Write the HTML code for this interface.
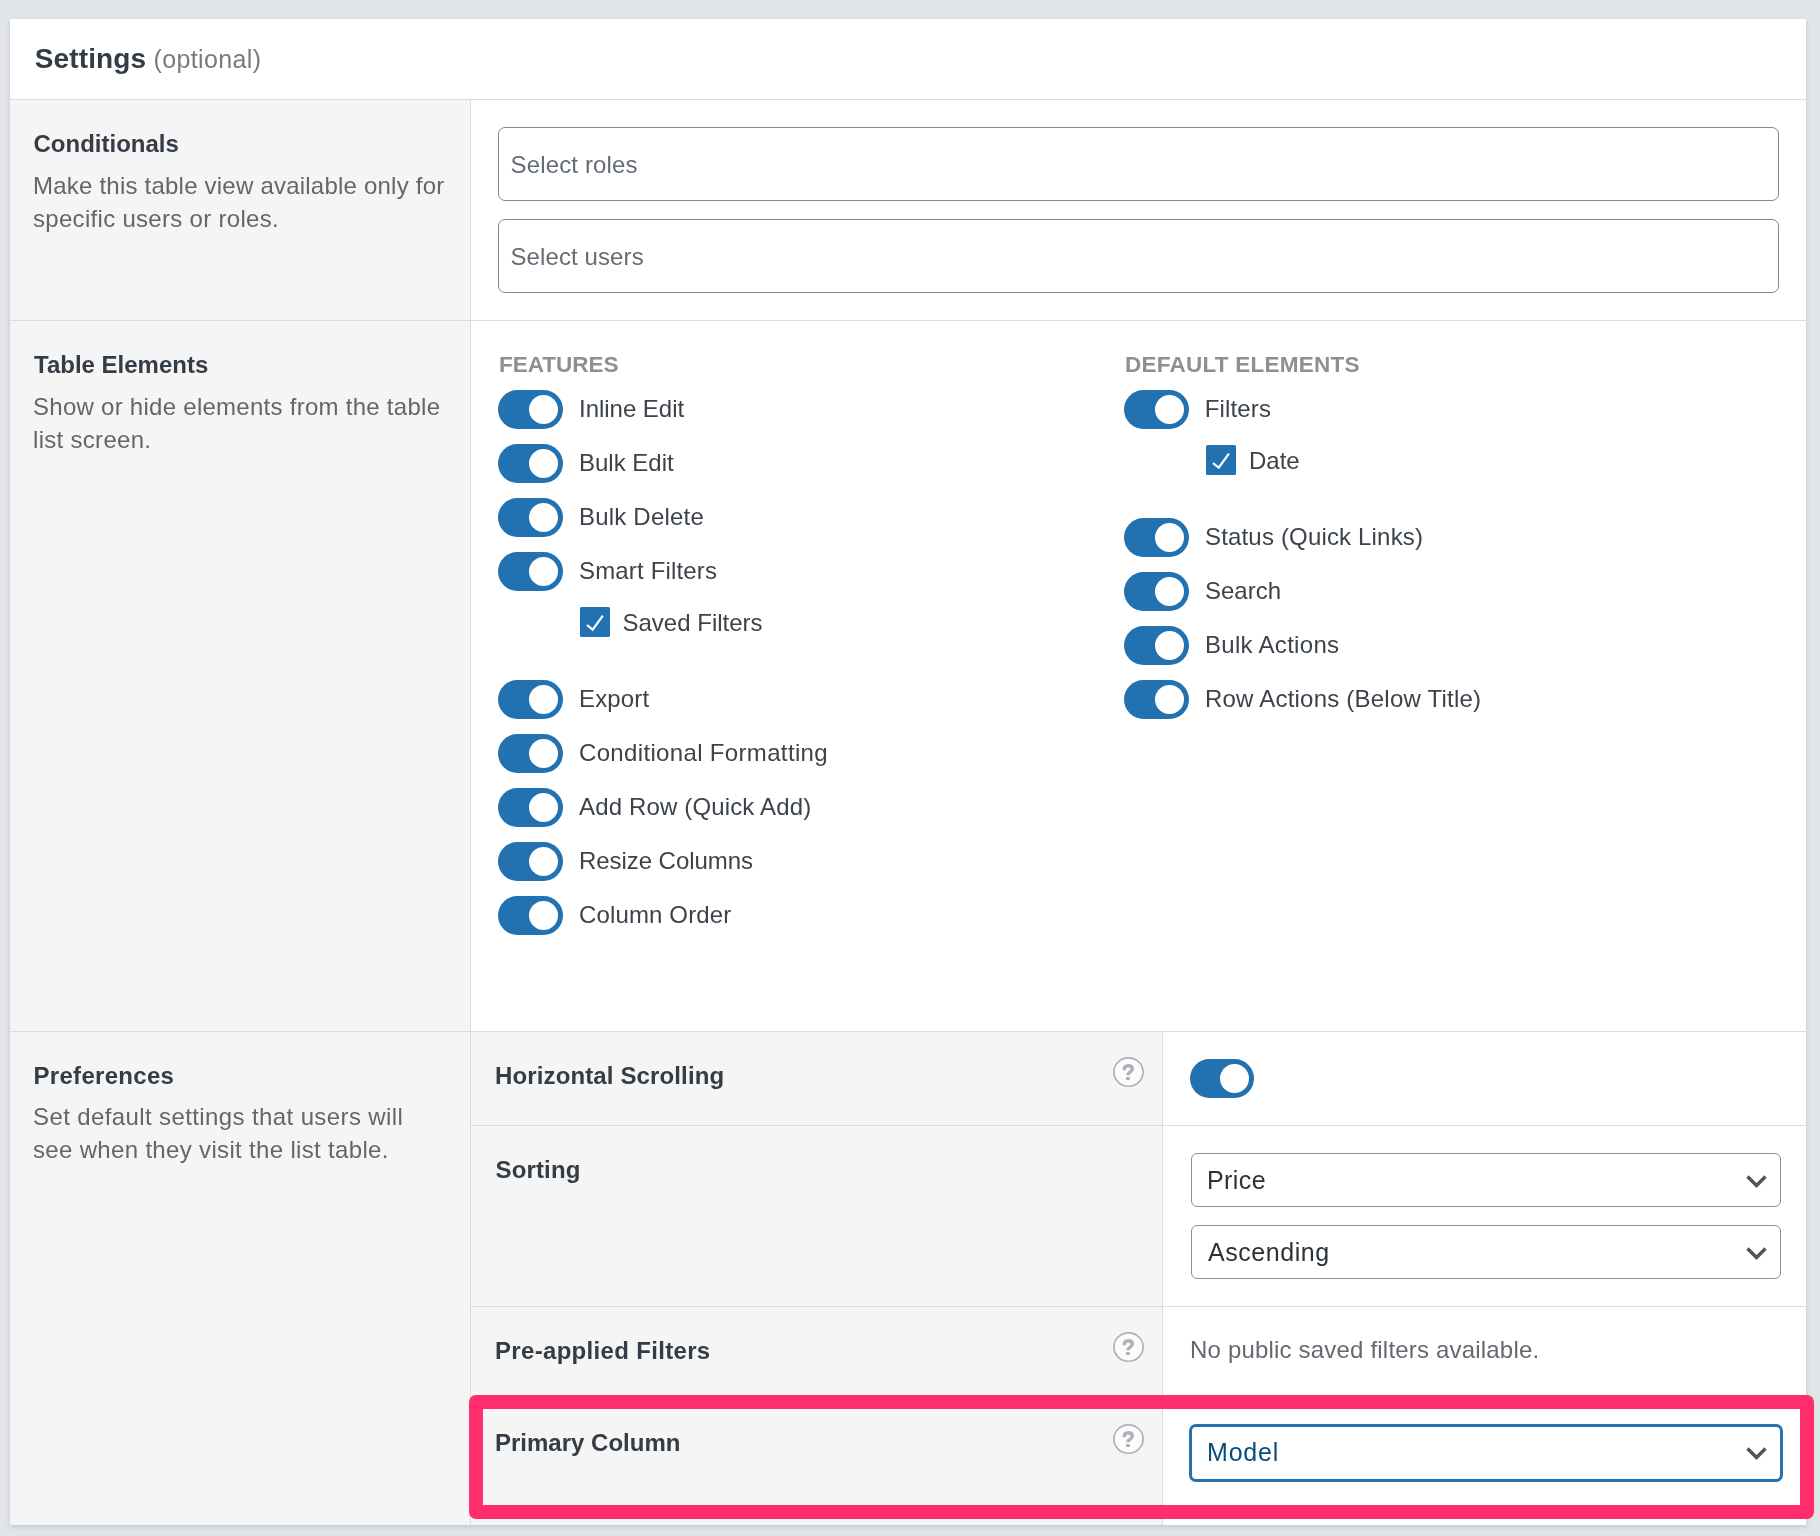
<!DOCTYPE html>
<html>
<head>
<meta charset="utf-8">
<title>Settings</title>
<style>
*{box-sizing:border-box;margin:0;padding:0}
html,body{width:1820px;height:1536px;overflow:hidden}
body{background:#e1e5e9;font-family:"Liberation Sans",sans-serif;position:relative;color:#3c434a}
#wrap{position:absolute;left:0;top:0;width:1820px;height:1536px;will-change:transform}
.abs{position:absolute}
#card{position:absolute;left:10px;top:19px;width:1796px;height:1506px;background:#fff;box-shadow:0 2px 5px rgba(0,0,0,.13)}
.lcol{position:absolute;left:10px;width:460px;background:#f5f5f5}
.hline{position:absolute;height:1px;background:#dcdcde}
.vline{position:absolute;width:1px;background:#dcdcde}
.t{position:absolute;white-space:nowrap;line-height:1}
.h1{font-weight:700;font-size:28px;color:#333b44}
.title{font-weight:700;font-size:24px;color:#343c45}
.desc{font-size:24px;color:#666;line-height:33px;white-space:nowrap;position:absolute}
.lab{font-size:24px;color:#3c434a}
.grp{font-size:22.5px;font-weight:700;color:#8f8f8f}
.inp{position:absolute;left:498px;width:1281px;height:74px;border:1px solid #7e8993;border-radius:7px;background:#fff}
.tog{position:absolute;width:65px;height:39px;border-radius:20px;background:#2271b1}
.tog i{position:absolute;right:4.75px;top:4.75px;width:29.5px;height:29.5px;border-radius:50%;background:#fff}
.chk{position:absolute;width:30px;height:30px;border-radius:1.5px;background:#2271b1}
.chk svg{position:absolute;left:0;top:0}
.sel{position:absolute;left:1191px;width:590px;height:54px;border:1px solid #8c8f94;border-radius:6px;background:#fff}
.sel svg{position:absolute;right:13px;top:21px}
.sel span{position:absolute;left:15px;top:14px;font-size:25px;line-height:1;color:#2c3338;white-space:nowrap}
.help{position:absolute;left:1113px;width:31px;height:31px}
</style>
</head>
<body>
<div id="wrap">
<div id="card"></div>

<!-- header -->
<div class="t h1" style="left:34.8px;top:45px;letter-spacing:.12px">Settings</div>
<div class="t" style="left:153.5px;top:47px;font-size:25px;color:#7a7a7a;letter-spacing:.36px">(optional)</div>
<div class="hline" style="left:10px;top:99px;width:1796px"></div>

<!-- left column backgrounds -->
<div class="lcol" style="top:100px;height:1425px"></div>
<div class="vline" style="left:470px;top:100px;height:1425px"></div>

<!-- row 1: Conditionals -->
<div class="t title" style="left:33.5px;top:132px">Conditionals</div>
<div class="desc" style="left:33px;top:169px"><span style="letter-spacing:0.22px">Make this table view available only for</span><br><span style="letter-spacing:0.3px">specific users or roles.</span></div>
<div class="inp" style="top:127px"><span class="t" style="left:11.5px;top:25px;font-size:24px;color:#646c75;letter-spacing:.15px">Select roles</span></div>
<div class="inp" style="top:219px"><span class="t" style="left:11.5px;top:25px;font-size:24px;color:#646c75;letter-spacing:.1px">Select users</span></div>
<div class="hline" style="left:10px;top:320px;width:1796px"></div>

<!-- row 2: Table Elements -->
<div class="t title" style="left:34px;top:353px">Table Elements</div>
<div class="desc" style="left:33px;top:390px"><span style="letter-spacing:0.27px">Show or hide elements from the table</span><br><span style="letter-spacing:0.3px">list screen.</span></div>

<div class="t grp" style="left:499px;top:354px">FEATURES</div>
<div class="tog" style="left:498px;top:390px"><i></i></div><div class="t lab" style="left:579px;top:397px;letter-spacing:-0.03px">Inline Edit</div>
<div class="tog" style="left:498px;top:444px"><i></i></div><div class="t lab" style="left:579px;top:451px;letter-spacing:0px">Bulk Edit</div>
<div class="tog" style="left:498px;top:498px"><i></i></div><div class="t lab" style="left:579px;top:505px;letter-spacing:0.2px">Bulk Delete</div>
<div class="tog" style="left:498px;top:552px"><i></i></div><div class="t lab" style="left:579px;top:559px;letter-spacing:0.16px">Smart Filters</div>
<div class="chk" style="left:580px;top:607px"><svg width="30" height="30" viewBox="0 0 30 30"><path d="M7 18 L12.7 22.6 L22.9 8.7" fill="none" stroke="#fff" stroke-width="2.2"/></svg></div><div class="t lab" style="left:622.5px;top:611px">Saved Filters</div>
<div class="tog" style="left:498px;top:680px"><i></i></div><div class="t lab" style="left:579px;top:687px;letter-spacing:0.15px">Export</div>
<div class="tog" style="left:498px;top:734px"><i></i></div><div class="t lab" style="left:579px;top:741px;letter-spacing:0.34px">Conditional Formatting</div>
<div class="tog" style="left:498px;top:788px"><i></i></div><div class="t lab" style="left:579px;top:795px;letter-spacing:0.15px">Add Row (Quick Add)</div>
<div class="tog" style="left:498px;top:842px"><i></i></div><div class="t lab" style="left:579px;top:849px;letter-spacing:-0.06px">Resize Columns</div>
<div class="tog" style="left:498px;top:896px"><i></i></div><div class="t lab" style="left:579px;top:903px;letter-spacing:0.14px">Column Order</div>

<div class="t grp" style="left:1125px;top:354px;letter-spacing:.25px">DEFAULT ELEMENTS</div>
<div class="tog" style="left:1124px;top:390px"><i></i></div><div class="t lab" style="left:1204.7px;top:397px;letter-spacing:.15px">Filters</div>
<div class="chk" style="left:1206px;top:445px"><svg width="30" height="30" viewBox="0 0 30 30"><path d="M7 18 L12.7 22.6 L22.9 8.7" fill="none" stroke="#fff" stroke-width="2.2"/></svg></div><div class="t lab" style="left:1249px;top:449px">Date</div>
<div class="tog" style="left:1124px;top:518px"><i></i></div><div class="t lab" style="left:1205px;top:525px;letter-spacing:0.17px">Status (Quick Links)</div>
<div class="tog" style="left:1124px;top:572px"><i></i></div><div class="t lab" style="left:1205px;top:579px">Search</div>
<div class="tog" style="left:1124px;top:626px"><i></i></div><div class="t lab" style="left:1205px;top:633px;letter-spacing:0.3px">Bulk Actions</div>
<div class="tog" style="left:1124px;top:680px"><i></i></div><div class="t lab" style="left:1205px;top:687px;letter-spacing:0.22px">Row Actions (Below Title)</div>

<div class="hline" style="left:10px;top:1031px;width:1796px"></div>

<!-- row 3: Preferences -->
<div class="t title" style="left:33.5px;top:1064px;letter-spacing:.3px">Preferences</div>
<div class="desc" style="left:33px;top:1100px"><span style="letter-spacing:0.39px">Set default settings that users will</span><br><span style="letter-spacing:0.33px">see when they visit the list table.</span></div>

<div class="abs" style="left:471px;top:1032px;width:691px;height:493px;background:#f5f5f5"></div>
<div class="vline" style="left:1162px;top:1032px;height:493px"></div>
<div class="hline" style="left:471px;top:1125px;width:1335px"></div>
<div class="hline" style="left:471px;top:1306px;width:1335px"></div>

<div class="t title" style="left:495px;top:1064px;letter-spacing:.13px">Horizontal Scrolling</div>
<div class="help" style="top:1057px"><svg width="31" height="31" viewBox="0 0 31 31"><ellipse cx="15.5" cy="15.05" rx="14.6" ry="14.2" fill="#fcfcfc" stroke="#adb2b8" stroke-width="1.7"/><path d="M11.1 13.3 C11.1 10.2 13 8.75 15.3 8.75 C17.8 8.75 19.3 10.2 19.3 12.1 C19.3 15.2 14.9 15 14.9 18.3" fill="none" stroke="#adb2b8" stroke-width="3.4"/><rect x="13" y="20.1" width="3.8" height="2.9" fill="#adb2b8"/></svg></div>
<div class="tog" style="left:1190px;top:1059px;width:64px"><i></i></div>

<div class="t title" style="left:495.5px;top:1158px;letter-spacing:.15px">Sorting</div>
<div class="sel" style="top:1153px"><span style="letter-spacing:.4px">Price</span><svg width="21" height="13" viewBox="0 0 21 13"><path d="M1.5 1.5 L10.5 10.5 L19.5 1.5" fill="none" stroke="#555" stroke-width="3.4"/></svg></div>
<div class="sel" style="top:1225px"><span style="letter-spacing:.55px;left:16px">Ascending</span><svg width="21" height="13" viewBox="0 0 21 13"><path d="M1.5 1.5 L10.5 10.5 L19.5 1.5" fill="none" stroke="#555" stroke-width="3.4"/></svg></div>

<div class="t title" style="left:495px;top:1339px;letter-spacing:.32px">Pre-applied Filters</div>
<div class="help" style="top:1332px"><svg width="31" height="31" viewBox="0 0 31 31"><ellipse cx="15.5" cy="15.05" rx="14.6" ry="14.2" fill="#fcfcfc" stroke="#adb2b8" stroke-width="1.7"/><path d="M11.1 13.3 C11.1 10.2 13 8.75 15.3 8.75 C17.8 8.75 19.3 10.2 19.3 12.1 C19.3 15.2 14.9 15 14.9 18.3" fill="none" stroke="#adb2b8" stroke-width="3.4"/><rect x="13" y="20.1" width="3.8" height="2.9" fill="#adb2b8"/></svg></div>
<div class="t" style="left:1190px;top:1338px;font-size:24px;color:#646970;letter-spacing:.19px">No public saved filters available.</div>

<div class="t title" style="left:495px;top:1431px">Primary Column</div>
<div class="help" style="top:1424px"><svg width="31" height="31" viewBox="0 0 31 31"><ellipse cx="15.5" cy="15.05" rx="14.6" ry="14.2" fill="#fcfcfc" stroke="#adb2b8" stroke-width="1.7"/><path d="M11.1 13.3 C11.1 10.2 13 8.75 15.3 8.75 C17.8 8.75 19.3 10.2 19.3 12.1 C19.3 15.2 14.9 15 14.9 18.3" fill="none" stroke="#adb2b8" stroke-width="3.4"/><rect x="13" y="20.1" width="3.8" height="2.9" fill="#adb2b8"/></svg></div>
<div class="sel" style="top:1424px;left:1189px;width:594px;height:58px;border:3px solid #2271b1;border-radius:7px"><span style="color:#0a4b78;top:13px;left:15px;letter-spacing:.8px">Model</span><svg width="21" height="13" viewBox="0 0 21 13" style="top:20px;right:13px"><path d="M1.5 1.5 L10.5 10.5 L19.5 1.5" fill="none" stroke="#555" stroke-width="3.4"/></svg></div>

<!-- pink highlight -->
<div class="abs" style="left:469px;top:1395px;width:1345px;height:124px;border:14px solid #ff2d6c;border-radius:7px"></div>
</div>
</body>
</html>
